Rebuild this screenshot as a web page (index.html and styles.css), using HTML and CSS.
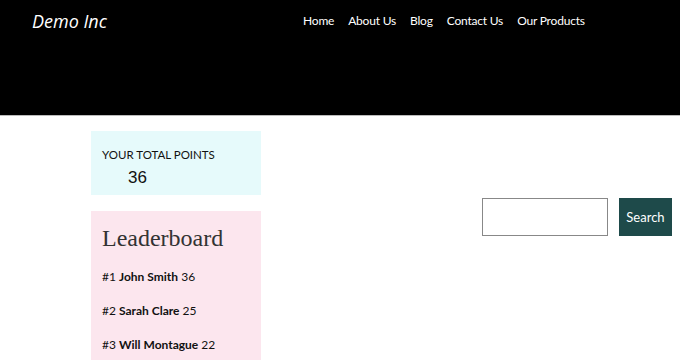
FILE: index.html
```html
<!DOCTYPE html>
<html>
<head>
<meta charset="utf-8">
<link rel="stylesheet" href="styles.css">
</head>
<body>
<header class="site-header">
  <div class="logo">Demo Inc</div>
  <nav class="nav">
    <a href="#">Home</a>
    <a href="#">About Us</a>
    <a href="#">Blog</a>
    <a href="#">Contact Us</a>
    <a href="#">Our Products</a>
  </nav>
</header>
<main class="main">
  <aside class="side">
    <section class="points">
      <div class="points-label">YOUR TOTAL POINTS</div>
      <div class="points-value">36</div>
    </section>
    <section class="board">
      <h2 class="board-title">Leaderboard</h2>
      <p class="row">#1 <b>John Smith</b> 36</p>
      <p class="row">#2 <b>Sarah Clare</b> 25</p>
      <p class="row">#3 <b>Will Montague</b> 22</p>
    </section>
  </aside>
  <form class="search">
    <input class="search-input" type="text">
    <button class="search-btn" type="button">Search</button>
  </form>
</main>
</body>
</html>
```
FILE: styles.css
```css
* { box-sizing: border-box; }
body {
  margin: 0;
  font-family: Lato, "Open Sans", sans-serif;
  color: #111;
  background: #fff;
}
.site-header {
  height: 116px;
  background: #000;
  display: flex;
  align-items: flex-start;
  padding: 9px 0 0 32px;
  border-bottom: 1px solid #bbb;
}
.logo {
  color: #fff;
  font-family: "Open Sans", sans-serif;
  font-style: italic;
  font-size: 18px;
  width: 271px;
}
.nav {
  display: flex;
  gap: 14px;
  padding-top: 4px;
}
.nav a {
  color: #fff;
  text-decoration: none;
  font-size: 12px;
  letter-spacing: -0.2px;
}
.main {
  display: flex;
  justify-content: space-between;
  padding: 15px 8px 0 91px;
}
.side {
  width: 170px;
  display: flex;
  flex-direction: column;
  gap: 16px;
}
.points {
  background: #e6fafb;
  height: 64px;
  padding: 16px 11px 0;
}
.points-label {
  font-size: 11.5px;
  line-height: 16px;
}
.points-value {
  font-family: "Liberation Sans", Arial, sans-serif;
  font-size: 17px;
  margin: 5px 0 0 26px;
}
.board {
  background: #fce6ee;
  height: 160px;
  padding: 12px 11px 0;
}
.board-title {
  margin: 0 0 15px;
  font-family: "Liberation Serif", serif;
  font-weight: normal;
  font-size: 24px;
  color: #333;
  line-height: 30px;
}
.row {
  margin: 0 0 16px;
  font-size: 12px;
  line-height: 18px;
}
.row b { font-weight: 700; }
.search {
  display: flex;
  gap: 11px;
  margin-top: 67px;
  height: 38px;
}
.search-input {
  width: 126px;
  height: 38px;
  border: 1px solid #888;
  margin: 0;
}
.search-btn {
  width: 53px;
  height: 38px;
  background: #1e4a4a;
  color: #fff;
  border: 0;
  font-family: Lato, sans-serif;
  font-size: 13px;
  padding: 0;
}
```
